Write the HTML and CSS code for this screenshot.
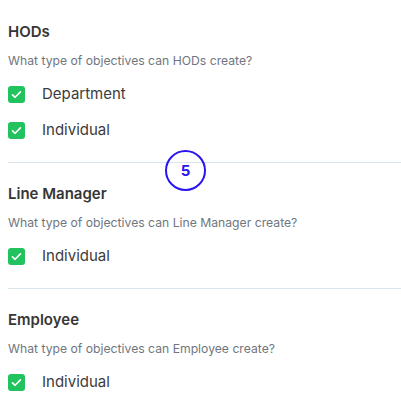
FILE: index.html
```html
<!DOCTYPE html>
<html lang="en">
<head>
    <meta charset="UTF-8">
    <meta name="viewport" content="width=device-width, initial-scale=1.0">
    <title>Objective Permissions</title>
    <link rel="stylesheet" href="styles.css">
</head>
<body>

<div class="settings">
    <section class="role">
        <h3 class="role-title">HODs</h3>
        <p class="role-question">What type of objectives can HODs create?</p>
        <label class="option">
            <span class="check"><svg viewBox="0 0 17 17"><path d="M4.5 8.8l2.6 2.5 5.3-5.4"/></svg></span>
            Department
        </label>
        <label class="option">
            <span class="check"><svg viewBox="0 0 17 17"><path d="M4.5 8.8l2.6 2.5 5.3-5.4"/></svg></span>
            Individual
        </label>
    </section>

    <section class="role">
        <h3 class="role-title">Line Manager</h3>
        <p class="role-question">What type of objectives can Line Manager create?</p>
        <label class="option">
            <span class="check"><svg viewBox="0 0 17 17"><path d="M4.5 8.8l2.6 2.5 5.3-5.4"/></svg></span>
            Individual
        </label>
    </section>

    <section class="role">
        <h3 class="role-title">Employee</h3>
        <p class="role-question">What type of objectives can Employee create?</p>
        <label class="option">
            <span class="check"><svg viewBox="0 0 17 17"><path d="M4.5 8.8l2.6 2.5 5.3-5.4"/></svg></span>
            Individual
        </label>
    </section>

    <!-- step marker -->
    <span class="step-badge">5</span>
</div>

</body>
</html>
```

FILE: styles.css
```css
body {
    margin: 0;
    font-family: Inter, "Open Sans", sans-serif;
    background-color: #fff;
    color: #3a3a3a;
}

.settings {
    position: relative;
    padding: 1px 0 0 8px;
}

.role {
    padding: 21px 0 22px;
}

.role + .role {
    border-top: 1px solid #d9e5ec;
}

.role-title {
    margin: 0;
    font-size: 15px;
    line-height: 20px;
    font-weight: 600;
    color: #363636;
}

.role-question {
    margin: 10px 0 0;
    font-size: 12.2px;
    line-height: 18px;
    color: #6f7680;
}

.option {
    display: flex;
    align-items: center;
    gap: 17px;
    margin-top: 16px;
    font-size: 15px;
    line-height: 20px;
    color: #3c3c3c;
}

.role-question + .option {
    margin-top: 14px;
}

.check {
    width: 17px;
    height: 17px;
    border-radius: 3px;
    background-color: #22c25e;
    display: flex;
}

.check svg {
    width: 17px;
    height: 17px;
    fill: none;
    stroke: #fff;
    stroke-width: 1.6;
    stroke-linecap: round;
    stroke-linejoin: round;
}

.step-badge {
    position: absolute;
    left: 165px;
    top: 150px;
    width: 37px;
    height: 37px;
    border: 2px solid #2a14f0;
    border-radius: 50%;
    display: flex;
    align-items: center;
    justify-content: center;
    font-size: 15px;
    font-weight: 700;
    color: #2a14f0;
}
```
